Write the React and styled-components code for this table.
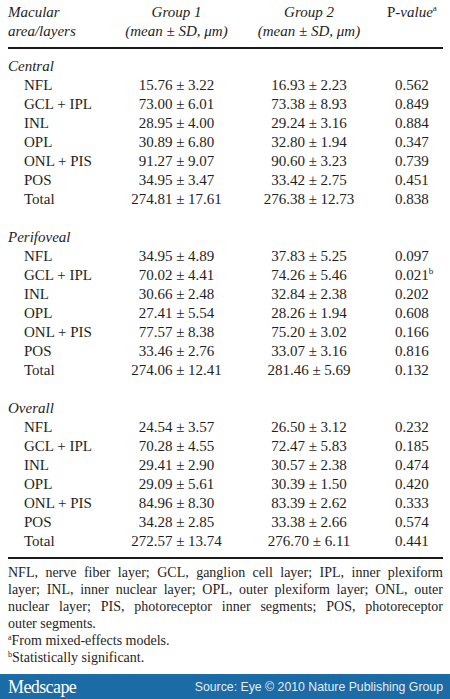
import React from 'react';
import styled, { createGlobalStyle } from 'styled-components';

const GlobalStyle = createGlobalStyle`
  html, body {
    margin: 0;
    padding: 0;
    background: #ffffff;
  }
`;

const Page = styled.div`
  width: 450px;
  height: 699px;
  display: flex;
  flex-direction: column;
  font-family: "Liberation Serif", "Times New Roman", serif;
  color: #1e1e1e;
  overflow: hidden;
`;

const TableWrap = styled.div`
  padding: 3px 7px 0 8px;
  flex: 1;
`;

const Row = styled.div`
  display: grid;
  grid-template-columns: 100px 137px 128px 1fr;
  height: 19px;
  line-height: 19px;
  font-size: 15px;
  white-space: nowrap;
`;

const Head = styled.div`
  padding-bottom: 6px;
  border-bottom: 2px solid #1a1a1a;
`;

const HeadCell = styled.div`
  font-style: italic;
  text-align: ${p => (p.$center ? 'center' : 'left')};
  padding-left: ${p => p.$pad || 0}px;
`;

const Roman = styled.span`
  font-style: normal;
`;

const Sup = styled.sup`
  font-size: 9px;
  line-height: 0;
  vertical-align: 6px;
  font-style: normal;
`;

const Body = styled.div`
  padding: 8px 0 6px;
  border-bottom: 2px solid #1a1a1a;
`;

const Section = styled.div`
  & + & {
    margin-top: 19px;
  }
`;

const Label = styled.div`
  padding-left: ${p => (p.$indent ? 16 : 0)}px;
  font-style: ${p => (p.$italic ? 'italic' : 'normal')};
`;

const Value = styled.div`
  text-align: center;
`;

const PValue = styled.div`
  padding-left: 22px;
`;

const Notes = styled.div`
  padding-top: 5px;
  font-size: 14px;
  line-height: 17px;
`;

const NoteLine = styled.div`
  text-align: ${p => (p.$full ? 'justify' : 'left')};
  text-align-last: ${p => (p.$full ? 'justify' : 'left')};
  white-space: nowrap;
`;

const NoteSup = styled.sup`
  font-size: 8px;
  line-height: 0;
  vertical-align: 5px;
`;

const Footer = styled.div`
  height: 25px;
  background: #1b6ba6;
  display: flex;
  align-items: center;
  justify-content: space-between;
  padding: 0 7px 0 8px;
`;

const Logo = styled.div`
  font-family: "Liberation Serif", "Times New Roman", serif;
  font-size: 18px;
  letter-spacing: -0.6px;
  color: #ffffff;
  padding-top: 1px;
`;

const Source = styled.div`
  font-family: "Liberation Sans", Arial, sans-serif;
  font-size: 12.3px;
  color: #e4ebf2;
  padding-top: 1px;
`;

const layers = ['NFL', 'GCL + IPL', 'INL', 'OPL', 'ONL + PIS', 'POS', 'Total'];

const sections = [
  {
    name: 'Central',
    rows: [
      ['15.76 ± 3.22', '16.93 ± 2.23', '0.562'],
      ['73.00 ± 6.01', '73.38 ± 8.93', '0.849'],
      ['28.95 ± 4.00', '29.24 ± 3.16', '0.884'],
      ['30.89 ± 6.80', '32.80 ± 1.94', '0.347'],
      ['91.27 ± 9.07', '90.60 ± 3.23', '0.739'],
      ['34.95 ± 3.47', '33.42 ± 2.75', '0.451'],
      ['274.81 ± 17.61', '276.38 ± 12.73', '0.838'],
    ],
  },
  {
    name: 'Perifoveal',
    rows: [
      ['34.95 ± 4.89', '37.83 ± 5.25', '0.097'],
      ['70.02 ± 4.41', '74.26 ± 5.46', '0.021', 'b'],
      ['30.66 ± 2.48', '32.84 ± 2.38', '0.202'],
      ['27.41 ± 5.54', '28.26 ± 1.94', '0.608'],
      ['77.57 ± 8.38', '75.20 ± 3.02', '0.166'],
      ['33.46 ± 2.76', '33.07 ± 3.16', '0.816'],
      ['274.06 ± 12.41', '281.46 ± 5.69', '0.132'],
    ],
  },
  {
    name: 'Overall',
    rows: [
      ['24.54 ± 3.57', '26.50 ± 3.12', '0.232'],
      ['70.28 ± 4.55', '72.47 ± 5.83', '0.185'],
      ['29.41 ± 2.90', '30.57 ± 2.38', '0.474'],
      ['29.09 ± 5.61', '30.39 ± 1.50', '0.420'],
      ['84.96 ± 8.30', '83.39 ± 2.62', '0.333'],
      ['34.28 ± 2.85', '33.38 ± 2.66', '0.574'],
      ['272.57 ± 13.74', '276.70 ± 6.11', '0.441'],
    ],
  },
];

const noteLines = [
  'NFL, nerve fiber layer; GCL, ganglion cell layer; IPL, inner plexiform',
  'layer; INL, inner nuclear layer; OPL, outer plexiform layer; ONL, outer',
  'nuclear layer; PIS, photoreceptor inner segments; POS, photoreceptor',
];

export default function App() {
  return (
    <Page>
      <GlobalStyle />
      <TableWrap>
        <Head>
          <Row>
            <HeadCell>Macular</HeadCell>
            <HeadCell $center>Group 1</HeadCell>
            <HeadCell $center>Group 2</HeadCell>
            <HeadCell $pad={14}>
              <Roman>P-</Roman>value<Sup>a</Sup>
            </HeadCell>
          </Row>
          <Row>
            <HeadCell>area/layers</HeadCell>
            <HeadCell $center>(mean ± SD, μm)</HeadCell>
            <HeadCell $center>(mean ± SD, μm)</HeadCell>
            <HeadCell />
          </Row>
        </Head>
        <Body>
          {sections.map(section => (
            <Section key={section.name}>
              <Row>
                <Label $italic>{section.name}</Label>
              </Row>
              {section.rows.map((r, i) => (
                <Row key={layers[i]}>
                  <Label $indent>{layers[i]}</Label>
                  <Value>{r[0]}</Value>
                  <Value>{r[1]}</Value>
                  <PValue>
                    {r[2]}
                    {r[3] && <Sup>{r[3]}</Sup>}
                  </PValue>
                </Row>
              ))}
            </Section>
          ))}
        </Body>
        <Notes>
          {noteLines.map(line => (
            <NoteLine key={line} $full>
              {line}
            </NoteLine>
          ))}
          <NoteLine>outer segments.</NoteLine>
          <NoteLine>
            <NoteSup>a</NoteSup>From mixed-effects models.
          </NoteLine>
          <NoteLine>
            <NoteSup>b</NoteSup>Statistically significant.
          </NoteLine>
        </Notes>
      </TableWrap>
      <Footer>
        <Logo>Medscape</Logo>
        <Source>Source: Eye © 2010 Nature Publishing Group</Source>
      </Footer>
    </Page>
  );
}
